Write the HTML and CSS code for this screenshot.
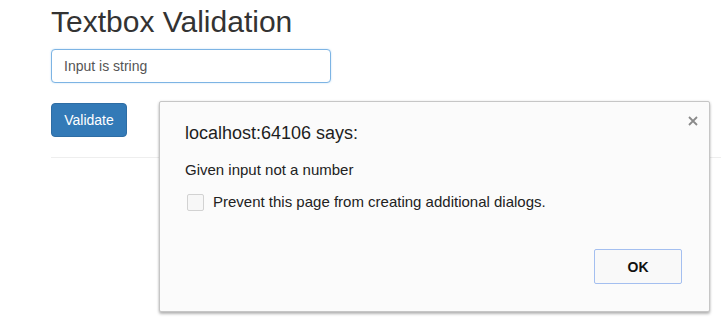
FILE: index.html
```html
<!DOCTYPE html>
<html>
<head>
  <meta charset="UTF-8">
  <title>Textbox Validation</title>
  <link rel="stylesheet" href="styles.css">
</head>
<body>
  <div class="page">
    <h2>Textbox Validation</h2>
    <input type="text" class="form-control" value="Input is string">
    <div>
      <button type="button" class="btn-primary">Validate</button>
    </div>
    <hr>
  </div>

  <div class="dialog">
    <svg class="dialog-close" width="10" height="10" viewBox="0 0 10 10">
      <path d="M1 1 L9 9 M9 1 L1 9" stroke="#8a8a8a" stroke-width="1.8" fill="none"/>
    </svg>
    <div class="dialog-title">localhost:64106 says:</div>
    <div class="dialog-message">Given input not a number</div>
    <label class="dialog-check">
      <span class="check-box"></span>
      <span>Prevent this page from creating additional dialogs.</span>
    </label>
    <div class="dialog-buttons">
      <button type="button" class="btn-ok">OK</button>
    </div>
  </div>
</body>
</html>
```

FILE: styles.css
```css
    body {
      margin: 0;
      background: #fff;
      font-family: "Liberation Sans", Arial, sans-serif;
      color: #333;
    }
    .page {
      padding-left: 51px;
    }
    h2 {
      margin: 5px 0 11px;
      font-size: 30px;
      line-height: 33px;
      font-weight: normal;
      color: #333;
    }
    .form-control {
      display: block;
      box-sizing: border-box;
      width: 280px;
      height: 34px;
      padding: 6px 12px;
      border: 1px solid #7db4e4;
      border-radius: 4px;
      box-shadow: 0 0 2px rgba(102, 175, 233, 0.4);
      font-family: inherit;
      font-size: 14px;
      color: #555;
      outline: none;
    }
    .btn-primary {
      margin-top: 20px;
      box-sizing: border-box;
      width: 76px;
      height: 34px;
      background-color: #337ab7;
      border: 1px solid #2e6da4;
      border-radius: 4px;
      color: #fff;
      font-family: inherit;
      font-size: 14px;
      padding: 0;
    }
    hr {
      margin: 20px 0 0;
      border: 0;
      border-top: 1px solid #eee;
    }
    /* alert box */
    .dialog {
      position: absolute;
      left: 159px;
      top: 101px;
      box-sizing: border-box;
      width: 551px;
      padding: 21px 27px 27px 25px;
      background: #fbfbfb;
      border: 1px solid #c6c6c6;
      border-radius: 2px;
      box-shadow: 0 2px 3px rgba(0, 0, 0, 0.28), 0 0 3px rgba(0, 0, 0, 0.08);
      color: #222;
    }
    .dialog-close {
      position: absolute;
      top: 14px;
      right: 11px;
    }
    .dialog-title {
      font-size: 18px;
      line-height: 20px;
      color: #1e1e1e;
    }
    .dialog-message {
      margin-top: 18px;
      font-size: 15px;
      line-height: 18px;
    }
    .dialog-check {
      display: flex;
      align-items: center;
      margin-top: 14px;
      font-size: 15px;
      line-height: 18px;
    }
    .check-box {
      box-sizing: border-box;
      width: 17px;
      height: 17px;
      margin: 0 9px 0 2px;
      background: #f7f7f7;
      border: 1px solid #d2d2d2;
      border-radius: 2px;
    }
    .dialog-buttons {
      display: flex;
      justify-content: flex-end;
      margin-top: 38px;
    }
    .btn-ok {
      box-sizing: border-box;
      width: 88px;
      height: 35px;
      padding: 0;
      background: #f9f9f9;
      border: 1px solid #a4bff0;
      border-radius: 2px;
      font-family: inherit;
      font-size: 14px;
      font-weight: bold;
      color: #111;
    }
```
